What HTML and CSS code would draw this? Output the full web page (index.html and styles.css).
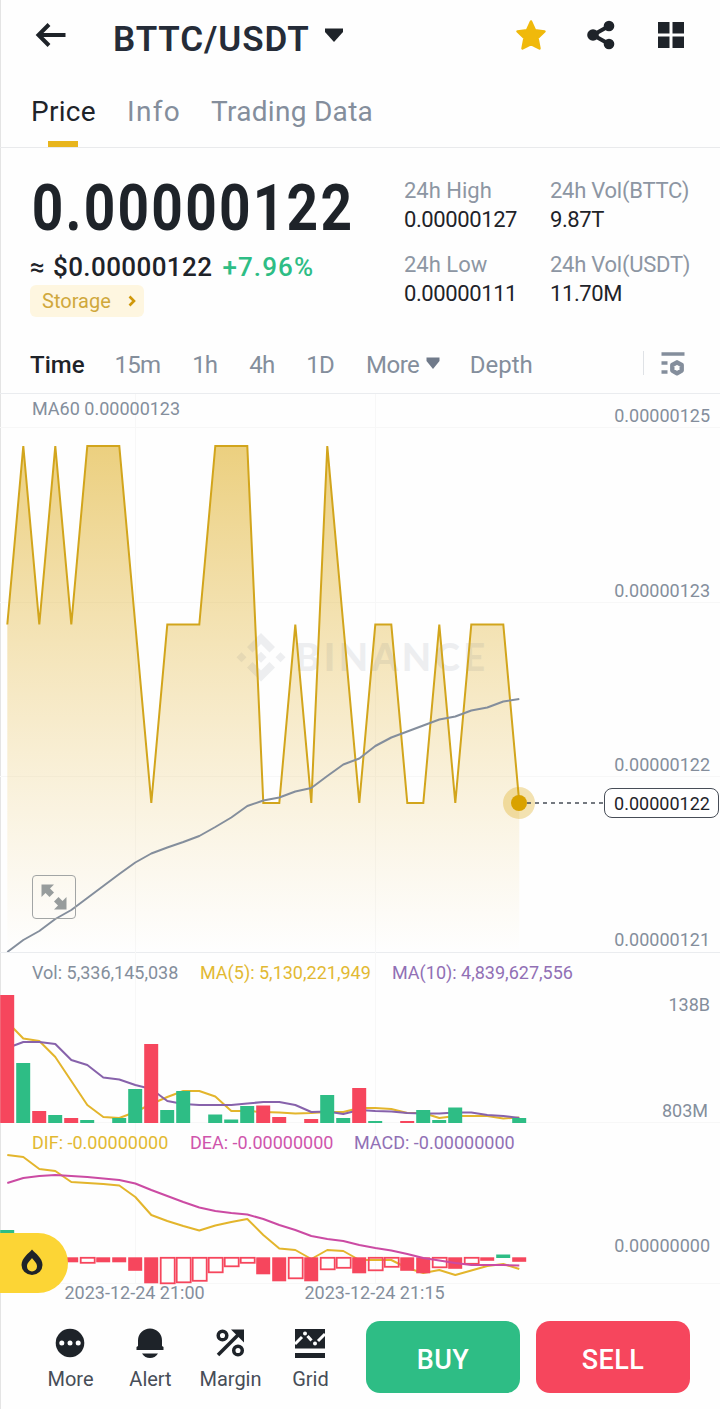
FILE: index.html
```html
<!DOCTYPE html>
<html lang="en">
<head>
  <meta charset="UTF-8" />
  <meta name="viewport" content="width=device-width, initial-scale=1.0"/>
  <title>BTTC/USDT</title>
  <link rel="stylesheet" href="styles.css">
</head>
<body>
  <div class="app">
    <header class="header">
      <svg class="back" width="32" height="26" viewBox="0 0 32 26"><path d="M30.500 13H4M14 2.500L3.500 13L14 23.500" fill="none" stroke="#1e2329" stroke-width="4"/></svg>
      <h1>BTTC/USDT</h1>
      <svg class="caret" width="20" height="15" viewBox="0 0 20 15"><path d="M1 0.500H19V4L10 14L1 4Z" fill="#1e2329"/></svg>
      <div class="header-icons">
        <svg width="32" height="32" viewBox="0 0 32 32"><path d="M16 2.500L20 11.300L29.500 12.400L22.500 19L24.500 29.500L16 25.200L7.500 29.500L9.500 19L2.500 12.400L12 11.300Z" fill="#f0b90b" stroke="#f0b90b" stroke-width="2.500" stroke-linejoin="round"/></svg>
        <svg class="share" width="30" height="30" viewBox="0 0 30 30"><path d="M23 6L7 15L23 24" fill="none" stroke="#1e2329" stroke-width="4"/><g fill="#1e2329"><circle cx="23" cy="6" r="5.300"/><circle cx="7" cy="15" r="5.800"/><circle cx="23" cy="24" r="5.300"/></g></svg>
        <svg width="26" height="26" viewBox="0 0 26 26"><path d="M0 0H11.500V11.500H0ZM14.500 0H26V11.500H14.500ZM0 14.500H11.500V26H0ZM14.500 14.500H26V26H14.500Z" fill="#1e2329"/></svg>
      </div>
    </header>

    <nav class="tabs">
      <a class="tab tab-price active">Price</a>
      <a class="tab tab-info">Info</a>
      <a class="tab tab-data">Trading Data</a>
    </nav>

    <section class="summary">
      <div class="price-box">
        <div class="price">0.00000122</div>
        <div class="fiat"><span class="approx">≈</span><span class="usd">$0.00000122</span><span class="change">+7.96%</span></div>
        <div class="tag">Storage
          <svg width="8" height="12" viewBox="0 0 8 12"><path d="M1.500 1.500L6 6L1.500 10.500" fill="none" stroke="#d0980b" stroke-width="2.600"/></svg>
        </div>
      </div>
      <div class="stats">
        <div class="stat"><span class="label">24h High</span><span class="value">0.00000127</span></div>
        <div class="stat"><span class="label vol">24h Vol(BTTC)</span><span class="value">9.87T</span></div>
        <div class="stat"><span class="label">24h Low</span><span class="value">0.00000111</span></div>
        <div class="stat"><span class="label vol">24h Vol(USDT)</span><span class="value">11.70M</span></div>
      </div>
    </section>

    <nav class="intervals">
      <a class="active">Time</a>
      <a class="num">15m</a>
      <a class="num">1h</a>
      <a class="num">4h</a>
      <a class="num">1D</a>
      <a class="more">More <svg width="14" height="13" viewBox="0 0 14 13"><path d="M0.500 0.500H13.500V4L7 12L0.500 4Z" fill="#707a8a"/></svg></a>
      <a class="depth">Depth</a>
      <span class="divider"></span>
      <svg class="settings" width="24" height="24" viewBox="0 0 24 24"><path d="M0.500 2H23.500M0.500 11H6.500M0.500 20H6.500" stroke="#848e9c" stroke-width="3.600"/><path d="M16 10.300L20.700 13V18.600L16 21.300L11.300 18.600V13Z" fill="none" stroke="#848e9c" stroke-width="4.400" stroke-linejoin="round"/></svg>
    </nav>

    <section class="chart price-chart">
      <svg width="720" height="558" viewBox="0 394 720 558">
        <defs>
          <linearGradient id="fade" x1="0" y1="446" x2="0" y2="952" gradientUnits="userSpaceOnUse">
            <stop offset="0" stop-color="#d9a100" stop-opacity="0.500"/>
            <stop offset="1" stop-color="#e5b53c" stop-opacity="0"/>
          </linearGradient>
        </defs>
        <path class="grid" d="M0 427.500H720M0 602.500H720M0 776.500H720M135.500 394V952M375.500 394V952"/>
        <polygon id="area" fill="url(#fade)"/>
        <g class="watermark">
          <path d="M247 647L261 633L275 647L269.500 652.500L261 644L252.500 652.500ZM247 667.400L252.500 661.900L261 670.400L269.500 661.900L275 667.400L261 681.400ZM236.500 657.200L241.500 652.200L246.500 657.200L241.500 662.200ZM275.500 657.200L280.500 652.200L285.500 657.200L280.500 662.200ZM255.500 657.200L261 651.700L266.500 657.200L261 662.700Z"/>
          <text x="295" y="671" textLength="190">BINANCE</text>
        </g>
        <polyline id="priceLine" class="price-line"/>
        <polyline id="ma60" class="line" stroke="#848e9c"/>
        <circle cx="519" cy="803" r="16" fill="#d9a200" fill-opacity="0.300"/>
        <circle cx="519" cy="803" r="8" fill="#d9a200"/>
        <path d="M527 803H604" stroke="#474d57" stroke-width="1.300" stroke-dasharray="4 4"/>
        <text class="legend" x="32" y="415">MA60 0.00000123</text>
        <g class="legend axis">
          <text x="710" y="422">0.00000125</text>
          <text x="710" y="597">0.00000123</text>
          <text x="710" y="771">0.00000122</text>
          <text x="710" y="946">0.00000121</text>
        </g>
      </svg>
      <div class="last-price">0.00000122</div>
      <button class="expand">
        <svg width="26" height="26" viewBox="0 0 26 26"><path d="M0.500 0.500H13L9 4.500L13 8.500L8.500 13L4.500 9L0.500 13ZM25.500 25.500H13L17 21.500L13 17.500L17.500 13L21.500 17L25.500 13Z" fill="#979c9c"/></svg>
      </button>
    </section>

    <section class="chart volume-chart">
      <svg width="720" height="171" viewBox="0 952 720 171">
        <path class="grid" d="M0 1122.500H720M135.500 952V1123M375.500 952V1123"/>
        <polyline id="volMa5" class="line" stroke="#e3b52c"/>
        <polyline id="volMa10" class="line" stroke="#8762ab"/>
        <g id="volBars"></g>
        <g class="legend">
          <text x="32" y="979">Vol: 5,336,145,038</text>
          <text class="yellow" x="200" y="979">MA(5): 5,130,221,949</text>
          <text class="purple" x="392" y="979">MA(10): 4,839,627,556</text>
        </g>
        <g class="legend axis">
          <text x="710" y="1011">138B</text>
          <text x="708" y="1117">803M</text>
        </g>
      </svg>
    </section>

    <section class="chart macd-chart">
      <svg width="720" height="181" viewBox="0 1123 720 181">
        <path class="grid" d="M0 1283.500H720M135.500 1123V1283M375.500 1123V1283"/>
        <polyline id="dif" class="line" stroke="#e3b52c"/>
        <g id="macdBars"></g>
        <polyline id="dea" class="line" stroke="#cb4ba3"/>
        <g class="legend">
          <text class="yellow" x="32" y="1149">DIF: -0.00000000</text>
          <text class="pink" x="190" y="1149">DEA: -0.00000000</text>
          <text class="purple" x="354" y="1149">MACD: -0.00000000</text>
          <text x="64.500" y="1299">2023-12-24 21:00</text>
          <text x="304.500" y="1299">2023-12-24 21:15</text>
        </g>
        <text class="legend axis" x="710" y="1252">0.00000000</text>
      </svg>
      <button class="hot">
        <svg width="24" height="27" viewBox="0 0 24 27"><path d="M12 0.500C15 4 22.500 9 22.500 16A10.500 10 0 0 1 1.500 16C1.500 9 9 4 12 0.500Z" fill="#1e2329"/><path d="M12 9C13.500 11.500 17 13.500 17 17.500A5 5 0 0 1 7 17.500C7 13.500 10.500 11.500 12 9Z" fill="#fcd535"/></svg>
      </button>
    </section>

    <footer class="footer">
      <div class="action">
        <svg width="30" height="30" viewBox="0 0 30 30"><circle cx="15" cy="15" r="14.300" fill="#1e2329"/><g fill="#fff"><circle cx="6.800" cy="15" r="2.500"/><circle cx="15" cy="15" r="2.500"/><circle cx="23.200" cy="15" r="2.500"/></g></svg>
        <span>More</span>
      </div>
      <div class="action">
        <svg width="30" height="30" viewBox="0 0 30 30"><path d="M3 18V12.500A12 12 0 0 1 27 12.500V18L28.500 19V22H1.500V19ZM7 25.500H23Q20 30 15 30Q10 30 7 25.500Z" fill="#1e2329"/></svg>
        <span>Alert</span>
      </div>
      <div class="action">
        <svg width="30" height="30" viewBox="0 0 30 30"><g fill="none" stroke="#1e2329" stroke-width="3.500"><circle cx="7.500" cy="7.500" r="4.300"/><circle cx="23" cy="22.500" r="4.300"/><path d="M3 27L23 7"/></g><path d="M16 1.500H29V14.500Z" fill="#1e2329"/></svg>
        <span>Margin</span>
      </div>
      <div class="action">
        <svg width="32" height="30" viewBox="0 0 32 30"><path d="M1 1H31V20.500H1ZM1 25H31V30H1Z" fill="#1e2329"/><path d="M1 16L8 9M13.500 8L17.500 12.500M24 13L31 6" fill="none" stroke="#fff" stroke-width="3"/><circle cx="11" cy="5.500" r="2" fill="#fff"/><circle cx="21" cy="15.500" r="2" fill="#fff"/></svg>
        <span>Grid</span>
      </div>
      <button class="trade buy">BUY</button>
      <button class="trade sell">SELL</button>
    </footer>
  </div>

  <script src="script.js"></script>
</body>
</html>
```
FILE: styles.css
```css
body {
  margin: 0;
  font-family: Roboto, sans-serif;
  background: #fefefe;
  color: #1e2329;
}

button {
  border: none;
  padding: 0;
  font-family: inherit;
}

.app {
  width: 720px;
  height: 1409px;
  overflow: hidden;
  background: linear-gradient(to right, #e4e4e4 1px, #fefefe 1px);
}

.header {
  display: flex;
  align-items: center;
  height: 76px;
  padding: 0 36px 0 35px;
  box-sizing: border-box;
}

.header .back {
  margin-top: -6px;
}

h1 {
  margin: 4px 14px 0 46px;
  font-size: 35px;
  font-weight: 600;
  line-height: 40px;
  letter-spacing: 0.9px;
  color: #252c38;
}

.header .caret {
  margin-top: -6px;
}

.header-icons {
  display: flex;
  align-items: center;
  gap: 39px;
  margin: -6px 0 0 auto;
}

.header-icons .share {
  margin-right: 3px;
}

.tabs {
  display: flex;
  height: 71px;
  padding-left: 31px;
  border-bottom: 1px solid #e9eaec;
}

.tab {
  position: relative;
  margin-right: 31px;
  line-height: 72px;
  font-size: 28px;
  letter-spacing: 0.3px;
  color: #848e9c;
}

.tab-info {
  letter-spacing: 1.3px;
  margin-right: 30px;
}

.tab.active {
  color: #1e2329;
}

.tab.active::after {
  content: "";
  position: absolute;
  left: 17px;
  bottom: 0;
  width: 30px;
  height: 6px;
  background: #e8b51d;
}

.summary {
  display: flex;
  height: 188px;
}

.price-box {
  width: 373px;
  padding: 26px 0 0 30px;
}

.price {
  padding-left: 2px;
  font-size: 64px;
  font-weight: 700;
  line-height: 70px;
  letter-spacing: 2.6px;
  transform: scaleX(0.86);
  transform-origin: left;
}

.fiat {
  display: flex;
  font-size: 26px;
  font-weight: 500;
  line-height: 30px;
  margin-top: 8px;
}

.approx {
  width: 23px;
}

.usd {
  letter-spacing: 0.4px;
}

.change {
  margin-left: 10px;
  letter-spacing: 1.1px;
  color: #2ebd85;
}

.tag {
  display: flex;
  align-items: center;
  gap: 17px;
  width: 114px;
  height: 32px;
  margin-top: 3px;
  padding-left: 12px;
  box-sizing: border-box;
  border-radius: 6px;
  background: #fef6e0;
  color: #d0a83c;
  font-size: 20px;
}

.stats {
  display: grid;
  grid-template-columns: 146px 150px;
  grid-auto-rows: 74px;
  padding: 27px 0 0 1px;
}

.stat {
  display: flex;
  flex-direction: column;
}

.stat .label {
  font-size: 22px;
  line-height: 31px;
  color: #8d96a3;
}

.stat .vol {
  letter-spacing: -0.25px;
}

.stat .value {
  font-size: 22px;
  line-height: 27px;
  letter-spacing: -0.4px;
}

.intervals {
  display: flex;
  align-items: center;
  height: 57px;
  padding-left: 30px;
  border-bottom: 1px solid #eaecef;
  font-size: 24px;
  color: #848e9c;
}

.intervals a {
  margin-right: 32px;
  white-space: nowrap;
}

.intervals .active {
  margin-right: 30px;
  font-weight: 500;
  color: #1e2329;
}

.intervals .num {
  letter-spacing: -0.8px;
}

.intervals .more {
  letter-spacing: -0.5px;
  margin-right: 30px;
}

.more svg {
  margin: 0 0 3px 1px;
}

.divider {
  width: 1px;
  height: 24px;
  margin: -4px 17px 0 auto;
  background: #dfe2e6;
}

.settings {
  margin: -2px 35px 0 0;
}

.intervals .depth {
  margin-right: 0;
}

.chart {
  position: relative;
}

.chart > svg {
  display: block;
}

.grid {
  fill: none;
  stroke: #f7f7f7;
}

.price-chart {
  border-bottom: 1px solid #eaecef;
  margin-bottom: -1px;
}

.price-line {
  fill: none;
  stroke: #d2a51c;
  stroke-width: 2;
}

.line {
  fill: none;
  stroke-width: 2;
  stroke-linejoin: round;
}

.legend {
  font-size: 18px;
  fill: #848e9c;
}

.yellow {
  fill: #e2b932;
}

.pink {
  fill: #cf55ac;
}

.purple {
  fill: #9170b5;
}

.axis {
  text-anchor: end;
}

.watermark {
  fill: #5f6b7a;
  opacity: 0.1;
  font-family: Lato, sans-serif;
  font-size: 38px;
  font-weight: 900;
}

.last-price {
  position: absolute;
  right: 1px;
  top: 394px;
  width: 115px;
  height: 30px;
  padding-left: 1px;
  box-sizing: border-box;
  border: 1.5px solid #474d57;
  border-radius: 8px;
  background: #fff;
  font-size: 18px;
  line-height: 29px;
  text-align: center;
}

.expand {
  position: absolute;
  left: 32px;
  top: 481px;
  display: flex;
  align-items: center;
  justify-content: center;
  width: 44px;
  height: 44px;
  border: 1px solid #a2a5a5;
  border-radius: 4px;
  background: none;
}

.hot {
  position: absolute;
  left: 0;
  top: 110px;
  width: 68px;
  height: 60px;
  padding: 2px 4px 0 0;
  border-radius: 0 30px 30px 0;
  background: #fcd535;
}

.footer {
  display: flex;
  padding: 17px 0 0 30px;
}

.action {
  display: flex;
  flex-direction: column;
  align-items: center;
  width: 80px;
  margin-top: 7px;
  font-size: 20px;
  color: #474d57;
}

.action span {
  margin-top: 9px;
  padding-left: 1px;
}

.trade {
  width: 154px;
  height: 72px;
  margin-left: 16px;
  padding-top: 5px;
  border-radius: 14px;
  color: #fff;
  font-size: 27px;
  font-weight: 500;
  letter-spacing: 0.4px;
}

.buy {
  background: #2ebd85;
}

.sell {
  background: #f6465d;
}
```
FILE: script.js
```js
const STEP = 16;
const LEFT = 7.3;
const RED = "#f6465d";
const GREEN = "#2ebd85";

// H / M / L are the three price levels
const levels = { H: 446, M: 624.5, L: 803 };
const price = "MHMHMHHHMLMMMHHHLLMLHMLMMLLMLMMML".split("").map(c => levels[c]);

const ma60 = [952, 940, 931, 919, 910, 898, 886, 874, 862.5, 853.5, 847.5, 842, 836, 827, 817.5, 806, 800.5, 797.5, 791.5, 788, 776, 764.5, 758.5, 746, 737.5, 731.5, 725.5, 719.5, 716.5, 710.5, 707.5, 701.5, 699];
const volMa5 = [1022, 1038.5, 1041, 1057, 1081, 1105, 1117, 1118, 1112, 1104, 1097, 1091, 1091, 1096.5, 1111, 1111, 1112, 1112.5, 1113.5, 1113, 1112, 1112, 1108, 1108, 1109, 1113, 1113, 1118, 1116, 1116, 1116, 1118.5, 1117.5];
const volMa10 = [1048, 1042, 1042, 1044, 1060, 1065, 1077.5, 1079.5, 1085, 1089, 1101, 1104, 1105, 1105, 1105, 1103.5, 1102, 1102, 1105, 1112, 1111.5, 1114, 1110, 1111, 1111.5, 1113, 1113.5, 1113.5, 1112.5, 1112.5, 1115, 1116, 1118];
const dif = [1155, 1157, 1169, 1171, 1182, 1183, 1184, 1185.5, 1197, 1215, 1221, 1226, 1230.5, 1225.5, 1222, 1219, 1235, 1248.5, 1250, 1259, 1250, 1251, 1260, 1260, 1260, 1268, 1273, 1270, 1275, 1270.5, 1266, 1264, 1269];
const dea = [1183, 1178, 1176, 1175, 1176, 1177, 1178.5, 1180, 1183.5, 1190, 1196, 1202, 1207.5, 1211, 1213, 1214.5, 1219, 1225, 1230, 1236, 1239, 1241, 1245, 1248, 1250.5, 1254, 1258, 1260.5, 1263, 1265, 1265, 1265, 1265.5];

// r = red, g = green, . = no bar
const volColors = "rgrgrg.ggrgg.gggrr.rggrg.rggg...g";
const volHeights = [128, 60, 12, 8, 5, 3, 0, 5, 34, 79, 13, 32, 0, 8.5, 3.5, 17, 17.5, 6, 0, 4, 28, 5, 35, 2, 0, 2, 13, 3, 15.5, 0, 0, 0, 5];

// f = filled red, h = hollow red, g = green above the line
const macdKinds = "ggggfhffffhhhhhhffhfhhfhhffhfhfgf";
const macdHeights = [28, 20, 12, 6, 5, 5, 5, 5, 13.5, 26, 25.5, 24.5, 23, 14.5, 8.5, 5, 17, 24, 20.5, 24, 11.5, 10, 16, 12.5, 9, 13.5, 16, 9.5, 11.5, 6, 3.5, 3.5, 4.5];

function points(values) {
  return values.map((y, i) => `${LEFT + i * STEP},${y}`).join(" ");
}

function addRect(group, x, y, width, height, color, hollow) {
  const rect = document.createElementNS("http://www.w3.org/2000/svg", "rect");
  rect.setAttribute("x", hollow ? x + 0.5 : x);
  rect.setAttribute("y", hollow ? y + 0.5 : y);
  rect.setAttribute("width", width);
  rect.setAttribute("height", height);
  rect.setAttribute("fill", hollow ? "none" : color);
  if (hollow) {
    rect.setAttribute("stroke", color);
    rect.setAttribute("stroke-width", 1.8);
  }
  group.appendChild(rect);
}

const lines = { priceLine: price, ma60, volMa5, volMa10, dif, dea };
for (const id in lines) {
  document.getElementById(id).setAttribute("points", points(lines[id]));
}
document.getElementById("area").setAttribute("points", `7.3,952 ${points(price)} 519.3,952`);

const volBars = document.getElementById("volBars");
volHeights.forEach((h, i) => {
  if (h) addRect(volBars, 0.2 + i * STEP, 1123 - h, 14, h, volColors[i] === "r" ? RED : GREEN);
});

const macdBars = document.getElementById("macdBars");
macdHeights.forEach((h, i) => {
  const x = 0.2 + i * STEP;
  if (macdKinds[i] === "g") addRect(macdBars, x, 1258 - h, 14, h, GREEN);
  else addRect(macdBars, x, 1257.3, 14, h, RED, macdKinds[i] === "h");
});
```
